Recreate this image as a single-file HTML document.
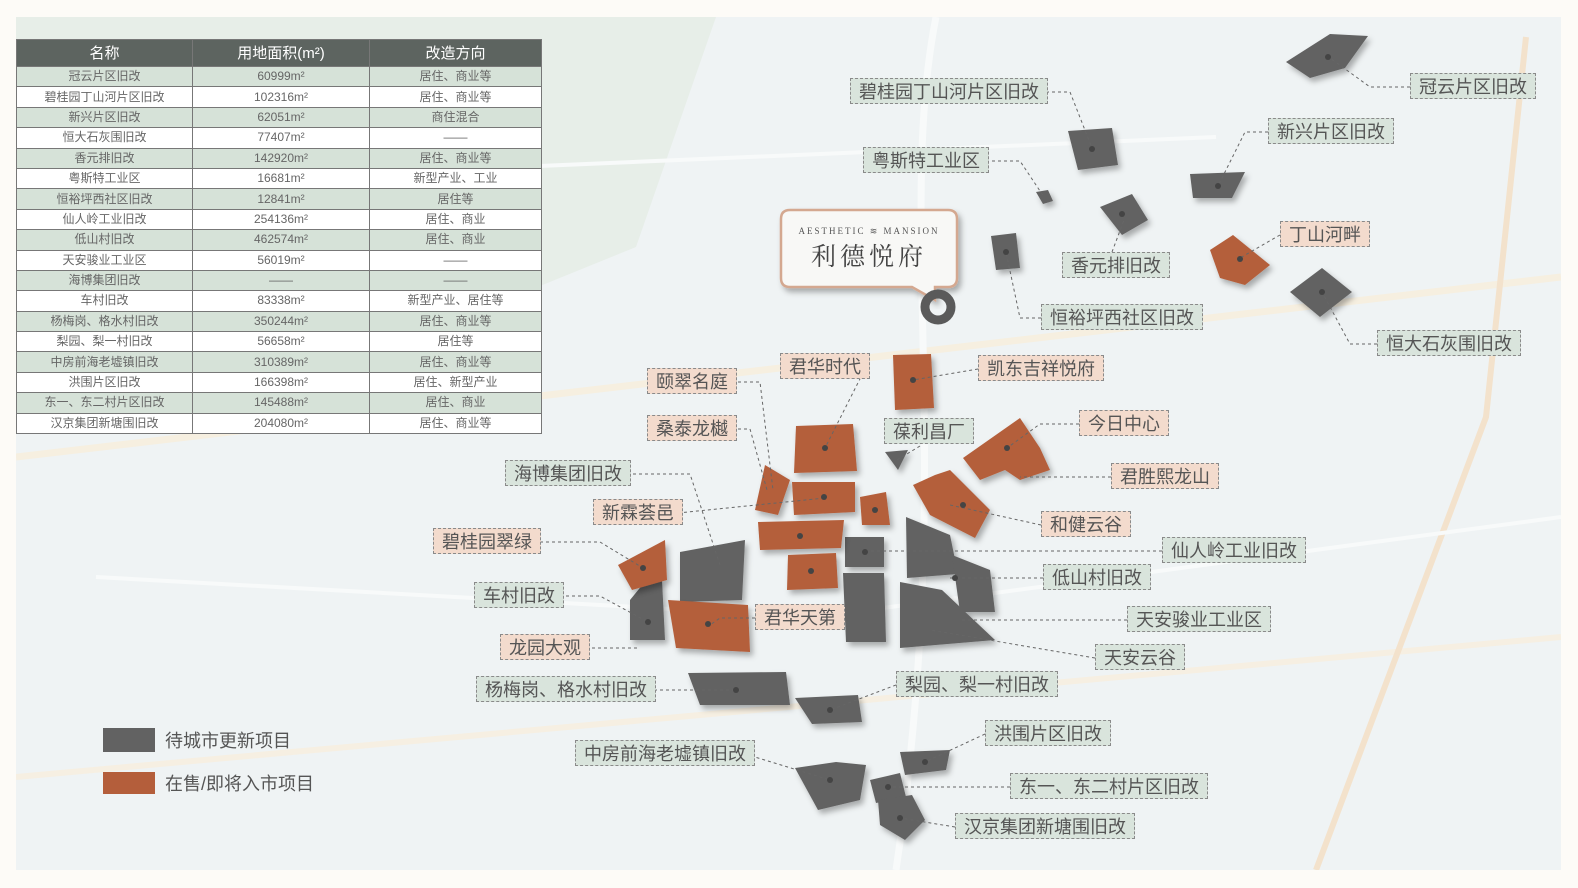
<!DOCTYPE html>
<html><head><meta charset="utf-8"><style>
body{margin:0;width:1578px;height:888px;background:#fdfbf7;position:relative;overflow:hidden;font-family:"Liberation Sans","Noto Sans CJK SC",sans-serif}
#map{position:absolute;left:16px;top:17px;width:1545px;height:853px;background:#eff3f4;overflow:hidden}
table{position:absolute;left:16px;top:39px;border-collapse:collapse;width:526px;font-size:12px;color:#666}
td,th{border:1px solid #777;text-align:center;height:19.4px;padding:0;line-height:19px}
th{background:#5d6460;color:#fff;font-weight:normal;font-size:15px;height:26px}
tr:nth-child(even) td{background:#d6e2d8}
tr:nth-child(odd) td{background:#fff}
.l{position:absolute;height:26px;line-height:26px;border:1.5px dashed #8a8a8a;font-size:18px;color:#555;padding:0 8px;white-space:nowrap;box-sizing:border-box}
.g{background:#d9e4dc}.p{background:#f3dbcd}
</style></head><body>
<div id="map">
<svg width="1545" height="853" style="position:absolute;left:0;top:0">
<path d="M0 0 L700 0 L620 230 L300 360 L0 400Z" fill="#e7eee8"/>
<path d="M0 440 L1545 260" stroke="#f6efe0" stroke-width="7" fill="none"/>
<path d="M0 760 L1545 620" stroke="#f6efe2" stroke-width="6" fill="none"/>
<path d="M1510 20 L1470 400 L1300 853" stroke="#f3e2cc" stroke-width="6" fill="none"/>
<path d="M920 0 C880 200 940 450 880 853" stroke="#f8fafa" stroke-width="7" fill="none"/>
<path d="M500 150 L1200 120" stroke="#f8fafa" stroke-width="4" fill="none"/>
<path d="M80 560 L800 600 L1545 500" stroke="#f8fafa" stroke-width="4" fill="none"/>
</svg>
</div>
<table>
<tr><th style="width:175px">名称</th><th style="width:176px">用地面积(m²)</th><th>改造方向</th></tr>
<tr><td>冠云片区旧改</td><td>60999m²</td><td>居住、商业等</td></tr>
<tr><td>碧桂园丁山河片区旧改</td><td>102316m²</td><td>居住、商业等</td></tr>
<tr><td>新兴片区旧改</td><td>62051m²</td><td>商住混合</td></tr>
<tr><td>恒大石灰围旧改</td><td>77407m²</td><td>——</td></tr>
<tr><td>香元排旧改</td><td>142920m²</td><td>居住、商业等</td></tr>
<tr><td>粤斯特工业区</td><td>16681m²</td><td>新型产业、工业</td></tr>
<tr><td>恒裕坪西社区旧改</td><td>12841m²</td><td>居住等</td></tr>
<tr><td>仙人岭工业旧改</td><td>254136m²</td><td>居住、商业</td></tr>
<tr><td>低山村旧改</td><td>462574m²</td><td>居住、商业</td></tr>
<tr><td>天安骏业工业区</td><td>56019m²</td><td>——</td></tr>
<tr><td>海博集团旧改</td><td>——</td><td>——</td></tr>
<tr><td>车村旧改</td><td>83338m²</td><td>新型产业、居住等</td></tr>
<tr><td>杨梅岗、格水村旧改</td><td>350244m²</td><td>居住、商业等</td></tr>
<tr><td>梨园、梨一村旧改</td><td>56658m²</td><td>居住等</td></tr>
<tr><td>中房前海老墟镇旧改</td><td>310389m²</td><td>居住、商业等</td></tr>
<tr><td>洪围片区旧改</td><td>166398m²</td><td>居住、新型产业</td></tr>
<tr><td>东一、东二村片区旧改</td><td>145488m²</td><td>居住、商业</td></tr>
<tr><td>汉京集团新塘围旧改</td><td>204080m²</td><td>居住、商业等</td></tr>
</table>
<svg width="1578" height="888" style="position:absolute;left:0;top:0">
<defs><filter id="s"><feDropShadow dx="3" dy="4" stdDeviation="3" flood-color="#000" flood-opacity="0.3"/></filter></defs>
<g fill="#626262" filter="url(#s)">
<polygon points="1286,62 1330,34 1368,36 1345,68 1310,78"/>
<polygon points="1068,131 1112,128 1118,165 1078,170"/>
<polygon points="1036,192 1048,190 1053,201 1043,204"/>
<polygon points="1100,207 1132,194 1148,220 1122,235"/>
<polygon points="1190,174 1245,172 1232,198 1193,198"/>
<polygon points="991,236 1016,233 1020,268 996,270"/>
<polygon points="1290,292 1322,268 1352,292 1320,317"/>
<polygon points="885,452 908,450 898,470"/>
<polygon points="680,552 745,540 742,600 680,602"/>
<polygon points="630,600 648,578 662,580 665,640 630,640"/>
<polygon points="845,537 884,537 884,567 845,567"/>
<polygon points="843,573 884,573 886,642 846,642"/>
<polygon points="906,517 950,535 958,574 907,578"/>
<polygon points="952,555 990,570 995,612 960,612"/>
<polygon points="900,582 942,590 995,640 900,648"/>
<polygon points="688,673 786,672 790,705 700,705"/>
<polygon points="795,698 858,695 862,722 812,724"/>
<polygon points="900,752 950,750 946,770 905,775"/>
<polygon points="795,768 836,762 866,765 860,800 818,810"/>
<polygon points="870,780 900,773 906,797 876,803"/>
<polygon points="878,800 912,795 925,820 905,840 880,825"/>
</g>
<g fill="#b45e3b" filter="url(#s)">
<polygon points="893,355 931,354 934,408 895,410"/>
<polygon points="1210,250 1233,235 1270,265 1245,285 1220,278"/>
<polygon points="796,426 853,424 857,471 794,473"/>
<polygon points="765,465 790,480 778,515 755,510"/>
<polygon points="792,482 855,482 855,512 794,515"/>
<polygon points="860,497 886,492 890,525 862,525"/>
<polygon points="963,458 1020,418 1040,448 1050,470 1020,480 1005,470 980,480"/>
<polygon points="913,485 935,475 950,470 990,510 975,538 930,515"/>
<polygon points="758,522 844,520 841,548 760,550"/>
<polygon points="788,555 836,553 838,588 787,590"/>
<polygon points="618,565 665,540 667,580 632,590"/>
<polygon points="668,600 748,605 750,652 676,648"/>
</g>
<g stroke="#666" stroke-dasharray="3,3" fill="none">
<path d="M1040 92 L1070 92 L1092 148"/><path d="M1410 87 L1370 87 L1330 58"/><path d="M1268 132 L1245 132 L1218 186"/>
<path d="M986 161 L1020 161 L1044 197"/><path d="M1280 235 L1240 258"/><path d="M1112 252 L1124 220"/>
<path d="M1041 318 L1020 318 L1006 252"/><path d="M1377 344 L1350 344 L1322 292"/><path d="M732 382 L760 382 L773 490"/>
<path d="M866 367 L825 448"/><path d="M978 369 L913 380"/><path d="M732 429 L750 429 L767 490"/><path d="M920 446 L897 460"/>
<path d="M1079 424 L1040 424 L1007 448"/><path d="M1111 477 L1020 477"/><path d="M627 474 L690 474 L720 565"/>
<path d="M678 513 L825 498"/><path d="M1041 525 L950 505"/><path d="M540 542 L600 542 L643 568"/>
<path d="M1162 551 L866 551"/><path d="M1043 578 L950 578"/><path d="M560 596 L600 596 L648 622"/>
<path d="M755 618 L720 618 L710 625"/><path d="M1127 620 L960 620"/><path d="M586 648 L640 648"/>
<path d="M1095 658 L930 630"/><path d="M648 690 L740 690"/><path d="M896 685 L830 710"/>
<path d="M985 734 L925 762"/><path d="M745 754 L830 780"/><path d="M1010 787 L888 787"/><path d="M955 827 L900 818"/>
</g>
<g fill="#444">
<circle cx="1328" cy="57" r="3"/><circle cx="1092" cy="149" r="3"/><circle cx="1122" cy="214" r="3"/><circle cx="1218" cy="186" r="3"/><circle cx="1006" cy="252" r="3"/><circle cx="1322" cy="292" r="3"/><circle cx="913" cy="380" r="3"/><circle cx="1240" cy="259" r="3"/><circle cx="825" cy="448" r="3"/><circle cx="1007" cy="448" r="3"/><circle cx="963" cy="505" r="3"/><circle cx="875" cy="510" r="3"/><circle cx="824" cy="497" r="3"/><circle cx="800" cy="536" r="3"/><circle cx="811" cy="571" r="3"/><circle cx="708" cy="624" r="3"/><circle cx="643" cy="568" r="3"/><circle cx="648" cy="622" r="3"/><circle cx="736" cy="690" r="3"/><circle cx="830" cy="710" r="3"/><circle cx="925" cy="762" r="3"/><circle cx="830" cy="780" r="3"/><circle cx="888" cy="787" r="3"/><circle cx="900" cy="818" r="3"/><circle cx="955" cy="578" r="3"/><circle cx="865" cy="552" r="3"/>
</g>
<path d="M790 210 H948 Q957 210 957 219 V278 Q957 287 948 287 H935 L935 300 L912 287 H790 Q781 287 781 278 V219 Q781 210 790 210Z" fill="#f8f8f6" stroke="#d4a890" stroke-width="2.5" filter="url(#s)"/>
<circle cx="938" cy="307" r="13" fill="none" stroke="#5a5a5a" stroke-width="9"/>
<text x="869" y="234" font-size="9" fill="#555" text-anchor="middle" letter-spacing="2" font-family="Liberation Serif">AESTHETIC ≋ MANSION</text>
<text x="869" y="265" font-size="25" fill="#444" text-anchor="middle" letter-spacing="4" font-family="Noto Serif CJK SC,serif">利德悦府</text>
<rect x="103" y="728" width="52" height="24" fill="#626262"/>
<rect x="103" y="772" width="52" height="22" fill="#b45e3b"/>
<text x="165" y="747" font-size="18" fill="#555">待城市更新项目</text>
<text x="165" y="790" font-size="18" fill="#555">在售/即将入市项目</text>
</svg>
<div class="l g" style="left:850px;top:78px">碧桂园丁山河片区旧改</div>
<div class="l g" style="left:1410px;top:73px">冠云片区旧改</div>
<div class="l g" style="left:1268px;top:118px">新兴片区旧改</div>
<div class="l g" style="left:863px;top:147px">粤斯特工业区</div>
<div class="l p" style="left:1280px;top:221px">丁山河畔</div>
<div class="l g" style="left:1062px;top:252px">香元排旧改</div>
<div class="l g" style="left:1041px;top:304px">恒裕坪西社区旧改</div>
<div class="l g" style="left:1377px;top:330px">恒大石灰围旧改</div>
<div class="l p" style="left:647px;top:368px">颐翠名庭</div>
<div class="l p" style="left:780px;top:353px">君华时代</div>
<div class="l p" style="left:978px;top:355px">凯东吉祥悦府</div>
<div class="l p" style="left:647px;top:415px">桑泰龙樾</div>
<div class="l g" style="left:884px;top:418px">葆利昌厂</div>
<div class="l p" style="left:1079px;top:410px">今日中心</div>
<div class="l g" style="left:505px;top:460px">海博集团旧改</div>
<div class="l p" style="left:1111px;top:463px">君胜熙龙山</div>
<div class="l p" style="left:593px;top:499px">新霖荟邑</div>
<div class="l p" style="left:1041px;top:511px">和健云谷</div>
<div class="l p" style="left:433px;top:528px">碧桂园翠绿</div>
<div class="l g" style="left:1162px;top:537px">仙人岭工业旧改</div>
<div class="l g" style="left:1043px;top:564px">低山村旧改</div>
<div class="l g" style="left:474px;top:582px">车村旧改</div>
<div class="l p" style="left:755px;top:604px">君华天第</div>
<div class="l g" style="left:1127px;top:606px">天安骏业工业区</div>
<div class="l p" style="left:500px;top:634px">龙园大观</div>
<div class="l g" style="left:1095px;top:644px">天安云谷</div>
<div class="l g" style="left:476px;top:676px">杨梅岗、格水村旧改</div>
<div class="l g" style="left:896px;top:671px">梨园、梨一村旧改</div>
<div class="l g" style="left:985px;top:720px">洪围片区旧改</div>
<div class="l g" style="left:575px;top:740px">中房前海老墟镇旧改</div>
<div class="l g" style="left:1010px;top:773px">东一、东二村片区旧改</div>
<div class="l g" style="left:955px;top:813px">汉京集团新塘围旧改</div>
</body></html>
